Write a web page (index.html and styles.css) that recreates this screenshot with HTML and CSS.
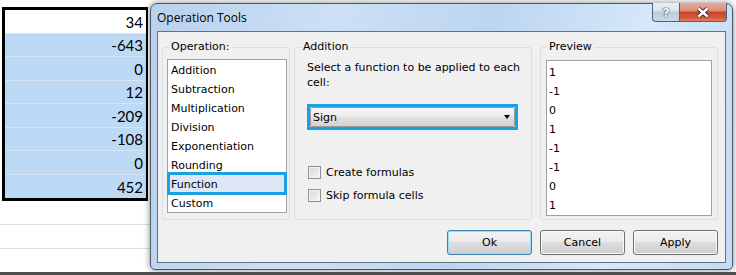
FILE: index.html
```html
<!DOCTYPE html>
<html lang="en">
<head>
    <meta charset="UTF-8">
    <title>Operation Tools</title>
    <link rel="stylesheet" href="styles.css">
</head>
<body>
    <div class="screen">
        <div class="desk">
            <div class="sheet">
                <div class="selection">
                    <div class="cell first">34</div>
                    <div class="cell">-643</div>
                    <div class="cell">0</div>
                    <div class="cell">12</div>
                    <div class="cell">-209</div>
                    <div class="cell">-108</div>
                    <div class="cell">0</div>
                    <div class="cell">452</div>
                </div>
                <div class="grid-row"></div>
                <div class="grid-row"></div>
                <div class="grid-row"></div>
            </div>

            <div class="dialog">
                <div class="titlebar">
                    <span class="title">Operation Tools</span>
                    <div class="caption">
                        <span class="cap help">?</span>
                        <span class="cap close">
                            <svg width="14" height="11" viewBox="0 0 14 11">
                                <path d="M2.5 1.5 L11.5 9.5 M11.5 1.5 L2.5 9.5" stroke="#3b2b2b" stroke-width="4.4" fill="none"/>
                                <path d="M2.5 1.5 L11.5 9.5 M11.5 1.5 L2.5 9.5" stroke="#fff" stroke-width="2.4" fill="none"/>
                            </svg>
                        </span>
                    </div>
                </div>

                <div class="client">
                    <div class="groups">
                        <fieldset class="group op-group">
                            <legend>Operation:</legend>
                            <ul class="listbox">
                                <li>Addition</li>
                                <li>Subtraction</li>
                                <li>Multiplication</li>
                                <li>Division</li>
                                <li>Exponentiation</li>
                                <li>Rounding</li>
                                <li class="picked">Function</li>
                                <li>Custom</li>
                            </ul>
                        </fieldset>

                        <fieldset class="group add-group">
                            <legend>Addition</legend>
                            <p class="prompt">Select a function to be applied to each cell:</p>
                            <div class="combo-mark">
                                <div class="combo">
                                    <span>Sign</span>
                                    <span class="arrow"></span>
                                </div>
                            </div>
                            <div class="checks">
                                <label class="check"><input type="checkbox"> Create formulas</label>
                                <label class="check"><input type="checkbox"> Skip formula cells</label>
                            </div>
                        </fieldset>

                        <fieldset class="group preview-group">
                            <legend>Preview</legend>
                            <ul class="listbox preview-list">
                                <li>1</li>
                                <li>-1</li>
                                <li>0</li>
                                <li>1</li>
                                <li>-1</li>
                                <li>-1</li>
                                <li>0</li>
                                <li>1</li>
                            </ul>
                        </fieldset>
                    </div>

                    <div class="actions">
                        <button class="btn default">Ok</button>
                        <button class="btn">Cancel</button>
                        <button class="btn">Apply</button>
                    </div>
                </div>
            </div>
        </div>
        <div class="bottom-strip"></div>
    </div>
</body>
</html>
```

FILE: styles.css
```css
* {
    margin: 0;
    padding: 0;
    box-sizing: border-box;
}

body {
    width: 736px;
    height: 275px;
    overflow: hidden;
    background-color: #fff;
    font-family: "DejaVu Sans", sans-serif;
    font-size: 11px;
    color: #000;
}

.screen {
    display: flex;
    flex-direction: column;
    height: 275px;
}

.desk {
    display: flex;
    height: 272px;
}

.bottom-strip {
    height: 3px;
    background-color: #4e4e4e;
}

/* spreadsheet behind the dialog */
.sheet {
    width: 150px;
    flex-shrink: 0;
}

.selection {
    margin: 7px 0 0 2px;
    width: 146px;
    border: 3px solid #000;
    border-right-width: 2px;
    background-color: #bcdaf6;
}

.cell {
    height: 23.5px;
    border-bottom: 1px solid #d7e5f2;
    display: flex;
    justify-content: flex-end;
    align-items: flex-end;
    padding: 0 3px 2px 0;
    font-family: Lato, sans-serif;
    font-size: 15px;
    line-height: 18px;
}

.cell.first {
    background-color: #fff;
}

.cell:last-child {
    border-bottom: none;
}

.grid-row {
    height: 24px;
    border-bottom: 1px solid #dadcdd;
}

.grid-row:first-of-type {
    height: 23px;
}

/* dialog window */
.dialog {
    margin-top: 3px;
    width: 583px;
    height: 267px;
    flex-shrink: 0;
    border: 1px solid #4b5867;
    border-radius: 7px 7px 5px 5px;
    background: linear-gradient(100deg, #b8d1ec 0%, #cde0f5 30%, #bcd5ef 55%, #d6e8fa 80%, #c3dbf3 100%);
    padding: 0 6px 6px;
    display: flex;
    flex-direction: column;
    box-shadow: 0 0 6px rgba(0, 0, 0, 0.5);
}

.titlebar {
    height: 27px;
    display: flex;
    align-items: center;
}

.title {
    font-family: "Open Sans", sans-serif;
    font-size: 12px;
}

.caption {
    margin-left: auto;
    margin-top: -1px;
    margin-right: -1px;
    align-self: flex-start;
    display: flex;
    height: 19px;
}

.cap {
    display: flex;
    align-items: center;
    justify-content: center;
    border: 1px solid #4e6378;
    border-top: none;
}

.cap.help {
    width: 27px;
    border-right: none;
    border-radius: 0 0 0 4px;
    background: linear-gradient(#eaf0f6, #dbe4ee 45%, #bccbdb 50%, #cbd9e7);
    font-weight: bold;
    font-size: 13px;
    color: #fff;
    text-shadow: 0 0 1px #2f3a45, 0 0 1px #2f3a45, 0 0 1px #2f3a45;
}

.cap.close {
    width: 48px;
    border-radius: 0 0 4px 0;
    background: linear-gradient(#e9a99a, #dc8a76 45%, #c7432b 50%, #d2573b 80%, #e27c5f);
}

.client {
    flex: 1;
    background-color: #f0f0f0;
    border: 1px solid #5f738a;
    padding: 8px 7px 6px 4px;
    display: flex;
    flex-direction: column;
}

.groups {
    display: flex;
}

.group {
    height: 180px;
    border: 1px solid #d5dfe5;
    border-radius: 3px;
    min-width: 0;
}

.group legend {
    margin-left: 6px;
    padding: 0 2px;
    line-height: 14px;
}

.op-group {
    width: 128px;
}

.add-group {
    width: 238px;
    margin-left: 4px;
}

.preview-group {
    width: 178px;
    margin-left: 8px;
}

.listbox {
    list-style: none;
    margin: 5px 2px 0 4px;
    height: 154px;
    border: 1px solid #a0a0a0;
    background-color: #fff;
    padding-top: 1px;
}

.listbox li {
    line-height: 19px;
    padding-left: 3px;
    white-space: nowrap;
}

.listbox .picked {
    position: relative;
    background-color: #dde7f6;
}

.listbox .picked::after {
    content: "";
    position: absolute;
    top: -3px;
    bottom: -1px;
    left: -1px;
    right: -1px;
    border: 3px solid #1aa1e1;
}

.preview-list {
    margin: 6px 5px 0 5px;
    height: 156px;
    padding-top: 2px;
}

.preview-list li {
    padding-left: 2px;
}

.prompt {
    margin: 6px 8px 0 12px;
    line-height: 15px;
}

.combo-mark {
    margin: 14px 0 0 12px;
    width: 211px;
    border: 3px solid #1aa1e1;
}

.combo {
    height: 20px;
    border: 1px solid #9a9a9a;
    border-radius: 2px;
    background: linear-gradient(#f6f6f6, #ececec 45%, #dedede 55%, #d3d3d3);
    display: flex;
    align-items: center;
    justify-content: space-between;
    padding: 0 4px 0 2px;
}

.arrow {
    width: 0;
    height: 0;
    border-left: 3.5px solid transparent;
    border-right: 3.5px solid transparent;
    border-top: 4px solid #000;
}

.checks {
    margin-top: 31px;
    padding-left: 13px;
}

.check {
    display: flex;
    align-items: center;
    height: 23px;
    gap: 5px;
}

.check input {
    appearance: none;
    width: 13px;
    height: 13px;
    border: 1px solid #8f8f8f;
    background: linear-gradient(135deg, #d8d8d8, #f6f6f6);
    box-shadow: inset 0 0 0 1px #f4f4f4;
}

.actions {
    display: flex;
    justify-content: flex-end;
    gap: 8px;
    margin-top: 10px;
}

.btn {
    width: 85px;
    height: 25px;
    border: 1px solid #707070;
    border-radius: 3px;
    background: linear-gradient(#f2f2f2, #ebebeb 45%, #dddddd 50%, #cfcfcf);
    box-shadow: inset 0 0 0 1px #fbfbfb;
    font: inherit;
    color: #000;
}

.btn.default {
    border-color: #3c7fb1;
    box-shadow: inset 0 0 0 1px #9fd9f6;
}
```
